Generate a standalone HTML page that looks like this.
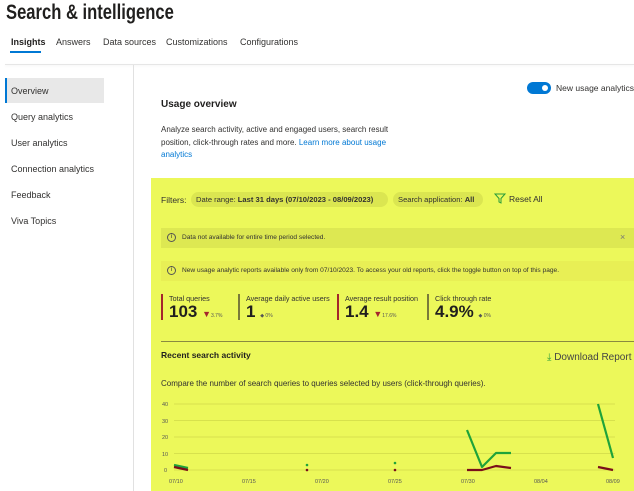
<!DOCTYPE html>
<html><head><meta charset="utf-8"><style>
*{margin:0;padding:0;box-sizing:border-box}
body{width:634px;height:491px;overflow:hidden;background:#fff;font-family:"Liberation Sans",sans-serif;color:#323130;position:relative}
.a{position:absolute;white-space:nowrap}
h1{position:absolute;left:6px;top:1px;font-size:21px;font-weight:bold;color:#201f1e;transform:scaleX(0.79);transform-origin:0 0;white-space:nowrap}
.tab{position:absolute;top:37px;font-size:9px;color:#323130}
.nav{position:absolute;left:11px;font-size:9px;color:#323130}
.hl{position:absolute;left:151px;top:178px;width:483px;height:313px;background:#ecf85a}
.pill{position:absolute;top:192px;height:15px;border-radius:8px;background:#dbe651;font-size:7.6px;line-height:15px;padding:0 5px;overflow:hidden}
.bar{position:absolute;height:20px;font-size:6.6px;line-height:20px;padding-left:21px}
.kpi{position:absolute;top:294px;height:26px;border-left:2px solid #a4262c;padding-left:6px}
.kpi .l{font-size:7.2px;line-height:9px}
.kpi .v{font-size:17px;font-weight:bold;line-height:18px;color:#201f1e}
.kpi .s{font-size:5px;font-weight:normal;color:#555}
</style></head><body>
<h1>Search &amp; intelligence</h1>
<div class="tab" style="left:11px;font-weight:bold;color:#201f1e">Insights</div>
<div class="a" style="left:10px;top:51px;width:31px;height:2px;background:#0078d4"></div>
<div class="tab" style="left:56px">Answers</div>
<div class="tab" style="left:103px">Data sources</div>
<div class="tab" style="left:166px">Customizations</div>
<div class="tab" style="left:240px">Configurations</div>
<div class="a" style="left:5px;top:64px;width:629px;height:1px;background:#e6e6e6;box-shadow:0 1px 2px rgba(0,0,0,.06)"></div>
<div class="a" style="left:133px;top:65px;width:1px;height:426px;background:#e1e1e1"></div>
<div class="a" style="left:5px;top:78px;width:99px;height:25px;background:#e8e8e8;border-left:2px solid #0078d4"></div>
<div class="nav" style="top:86px">Overview</div>
<div class="nav" style="top:112px">Query analytics</div>
<div class="nav" style="top:138px">User analytics</div>
<div class="nav" style="top:164px">Connection analytics</div>
<div class="nav" style="top:190px">Feedback</div>
<div class="nav" style="top:216px">Viva Topics</div>
<div class="a" style="left:527px;top:82px;width:24px;height:12px;border-radius:6px;background:#0078d4"><div style="position:absolute;right:3px;top:3px;width:6px;height:6px;border-radius:50%;background:#fff"></div></div>
<div class="a" style="left:556px;top:83px;font-size:8.5px">New usage analytics</div>
<div class="a" style="left:161px;top:99px;font-size:10px;font-weight:bold;color:#201f1e">Usage overview</div>
<div class="a" style="left:161px;top:124px;font-size:8px;line-height:12.5px;white-space:normal;width:234px">Analyze search activity, active and engaged users, search result position, click-through rates and more. <span style="color:#0078d4">Learn more about usage analytics</span></div>
<div class="hl"></div>
<div class="a" style="left:161px;top:195px;font-size:8.5px">Filters:</div>
<div class="pill" style="left:191px;width:197px">Date range: <b>Last 31 days (07/10/2023 - 08/09/2023)</b></div>
<div class="pill" style="left:393px;width:90px">Search application: <b>All</b></div>
<svg class="a" style="left:494px;top:193px" width="12" height="11" viewBox="0 0 12 11"><path d="M1 1h10L7 5.5V10L5 9V5.5Z" fill="none" stroke="#2a9d3a" stroke-width="1"/></svg>
<div class="a" style="left:509px;top:194px;font-size:8.5px">Reset All</div>
<div class="bar" style="left:161px;top:228px;width:473px;background:#dde852">Data not available for entire time period selected.</div>
<div class="a" style="left:167px;top:233px;width:9px;height:9px;border:1px solid #555;border-radius:50%;font-size:6px;line-height:7px;text-align:center">i</div>
<div class="a" style="left:620px;top:232px;font-size:9px;color:#777">×</div>
<div class="bar" style="left:161px;top:261px;width:473px;background:#e8ef55">New usage analytic reports available only from 07/10/2023. To access your old reports, click the toggle button on top of this page.</div>
<div class="a" style="left:167px;top:266px;width:9px;height:9px;border:1px solid #555;border-radius:50%;font-size:6px;line-height:7px;text-align:center">i</div>
<div class="kpi" style="left:161px"><div class="l">Total queries</div><div class="v">103 <span style="color:#a4262c;font-size:9px">▼</span><span class="s">3.7%</span></div></div>
<div class="kpi" style="left:238px;border-color:#7a7a3a"><div class="l">Average daily active users</div><div class="v">1 <span class="s">◆ 0%</span></div></div>
<div class="kpi" style="left:337px"><div class="l">Average result position</div><div class="v">1.4 <span style="color:#a4262c;font-size:9px">▼</span><span class="s">17.6%</span></div></div>
<div class="kpi" style="left:427px;border-color:#7a7a3a"><div class="l">Click through rate</div><div class="v">4.9% <span class="s">◆ 0%</span></div></div>
<div class="a" style="left:161px;top:341px;width:473px;height:1px;background:#8a8a40"></div>
<div class="a" style="left:161px;top:350px;font-size:8.5px;font-weight:bold;color:#201f1e">Recent search activity</div>
<div class="a" style="left:547px;top:352px;font-size:10px;color:#444"><span style="color:#2a9d3a">⤓</span> Download Report</div>
<div class="a" style="left:161px;top:379px;font-size:8px">Compare the number of search queries to queries selected by users (click-through queries).</div>
<svg class="a" style="left:151px;top:395px" width="483" height="96" viewBox="151 395 483 96">
<g stroke="#d0da4a" stroke-width="0.7">
<line x1="174" y1="404" x2="615" y2="404"/><line x1="174" y1="420.5" x2="615" y2="420.5"/><line x1="174" y1="437" x2="615" y2="437"/><line x1="174" y1="453.5" x2="615" y2="453.5"/><line x1="174" y1="470" x2="615" y2="470"/></g>
<g font-size="5.5" fill="#555" font-family="Liberation Sans">
<text x="162" y="406">40</text><text x="162" y="423">30</text><text x="162" y="439">20</text><text x="162" y="456">10</text><text x="164" y="472">0</text>
<text x="169" y="483">07/10</text><text x="242" y="483">07/15</text><text x="315" y="483">07/20</text><text x="388" y="483">07/25</text><text x="461" y="483">07/30</text><text x="534" y="483">08/04</text><text x="606" y="483">08/09</text></g>
<g fill="none" stroke-width="2.2" stroke-linejoin="round">
<polyline stroke="#1fa33a" points="174,465 188,468"/>
<polyline stroke="#1fa33a" points="467,430 482,467 496,453 511,453"/>
<polyline stroke="#1fa33a" points="598,404 613,458"/>
<polyline stroke="#7a0f1a" points="174,467 188,470"/>
<polyline stroke="#7a0f1a" points="467,470 482,470 496,466 511,468"/>
<polyline stroke="#7a0f1a" points="598,467 613,470"/></g>
<circle cx="307" cy="465" r="1.3" fill="#1fa33a"/><circle cx="307" cy="470" r="1.3" fill="#7a0f1a"/>
<circle cx="395" cy="463" r="1.3" fill="#1fa33a"/><circle cx="395" cy="470" r="1.3" fill="#7a0f1a"/>
</svg>
</body></html>
